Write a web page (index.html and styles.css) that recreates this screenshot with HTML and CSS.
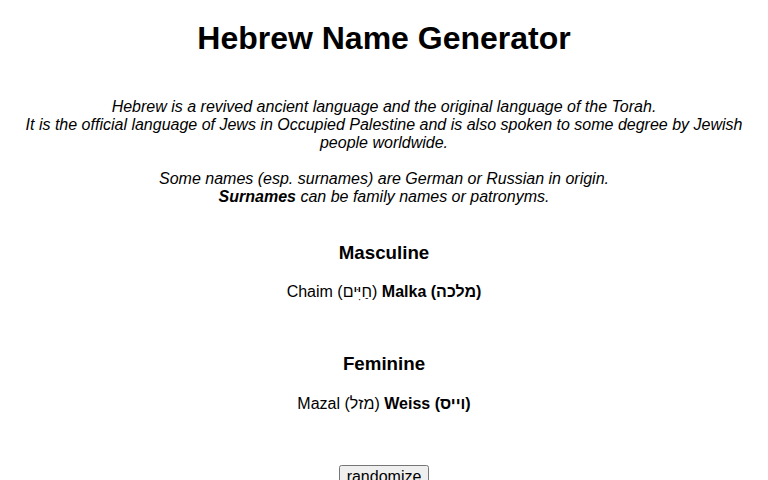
FILE: index.html
```html
<!DOCTYPE html>
<html>
<head>
<meta charset="utf-8">
<link rel="stylesheet" href="styles.css">
</head>
<body>
<h1 class="title">Hebrew Name Generator</h1>
<p class="intro">Hebrew is a revived ancient language and the original language of the Torah.<br>It is the official language of Jews in Occupied Palestine and is also spoken to some degree by Jewish people worldwide.<br><br>Some names (esp. surnames) are German or Russian in origin.<br><b>Surnames</b> can be family names or patronyms.</p>
<section class="group">
<h3 class="group-title">Masculine</h3>
<p class="name">Chaim (<span lang="he">חַיִּים</span>) <b>Malka (<span lang="he">מלכה</span>)</b></p>
</section>
<section class="group">
<h3 class="group-title">Feminine</h3>
<p class="name">Mazal (<span lang="he">מזל</span>) <b>Weiss (<span lang="he">וייס</span>)</b></p>
</section>
<div class="actions"><button class="btn" type="button">randomize</button></div>
</body>
</html>
```
FILE: styles.css
```css
html, body {
  margin: 0;
}
body {
  padding: 0 8px;
  font-family: "Liberation Sans", Arial, sans-serif;
  font-size: 16px;
  color: #000;
  background: #fff;
  text-align: center;
}
.title {
  font-size: 32px;
  margin: 20px 0 41px;
}
.intro {
  font-style: italic;
  margin: 0;
}
.group-title {
  font-size: 18.72px;
  margin: 36px 0 18.72px;
}
.name {
  margin: 0 0 52px;
}
.group + .group .group-title {
  margin-top: 0;
  margin-bottom: 20px;
}
.actions {
  margin-top: 0;
}
.btn {
  font-family: "Liberation Sans", Arial, sans-serif;
  font-size: 16px;
  padding: 1px 6px;
}
```
